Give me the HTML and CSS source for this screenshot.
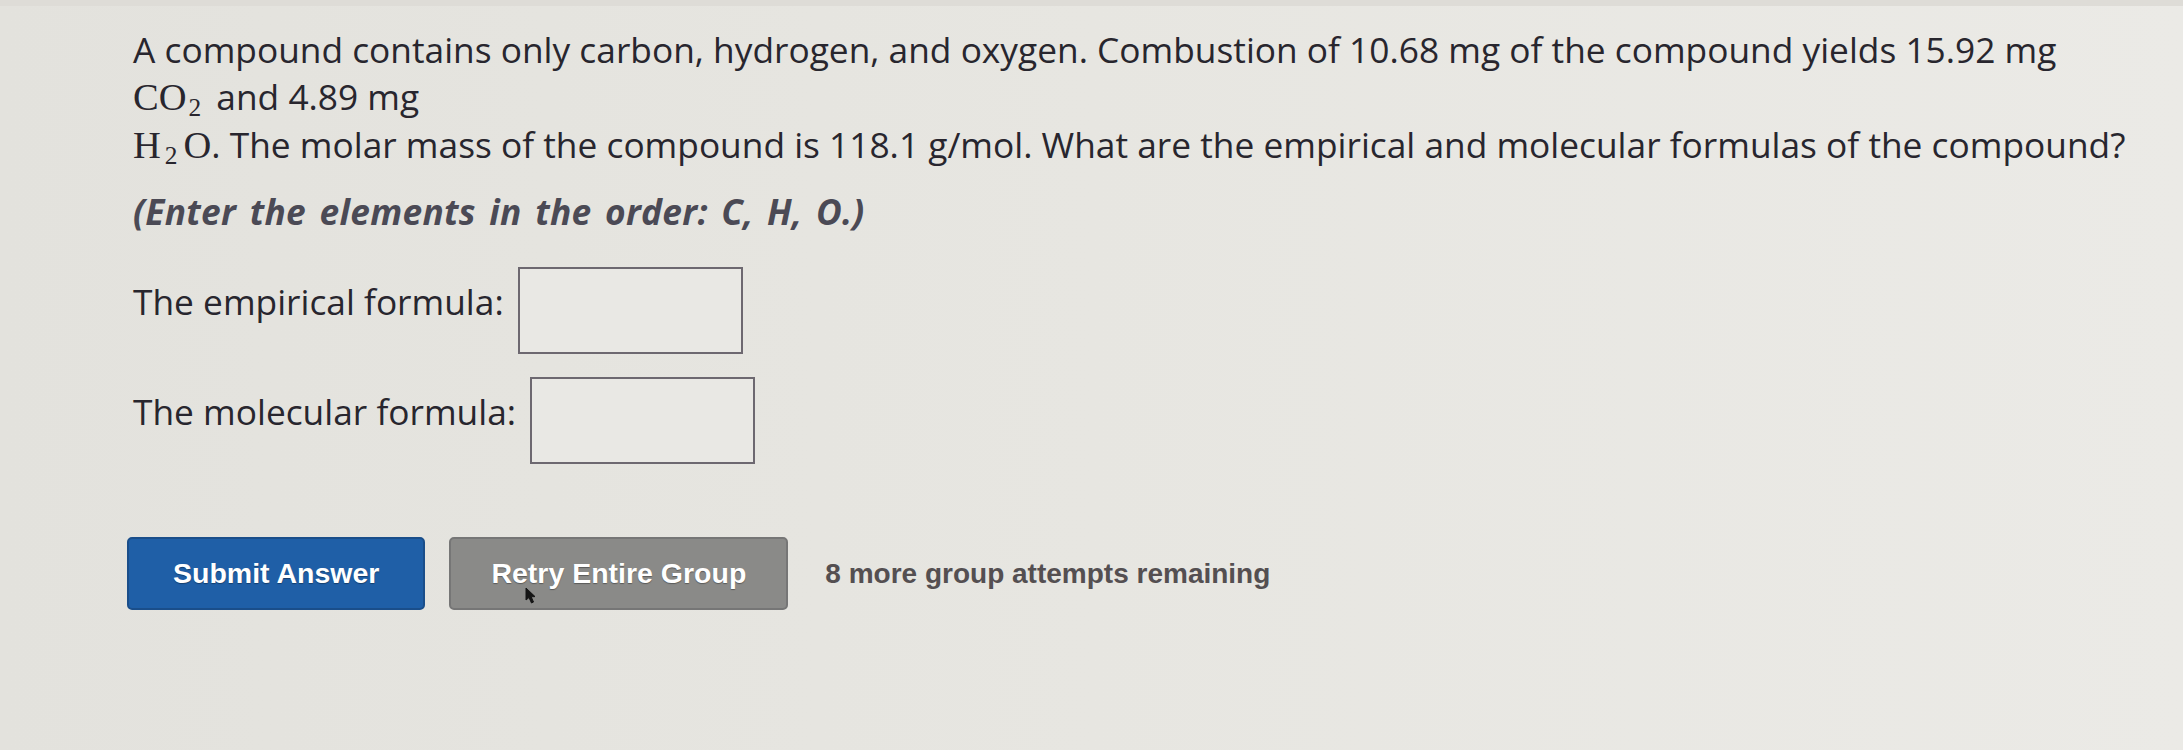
FILE: index.html
```html
<!DOCTYPE html>
<html lang="en">
<head>
<meta charset="utf-8">
<title>Question</title>
<link rel="stylesheet" href="styles.css">
</head>
<body>
<div class="page">
  <div class="question">
    <p class="prompt">A compound contains only carbon, hydrogen, and oxygen. Combustion of 10.68 mg of the compound yields 15.92 mg<br><span class="chem">CO<sub class="tail">2</sub></span> and 4.89 mg<br><span class="chem">H<sub class="gap">2</sub>O</span>. The molar mass of the compound is 118.1 g/mol. What are the empirical and molecular formulas of the compound?</p>
    <p class="hint">(Enter the elements in the order: C, H, O.)</p>
    <div class="answer-row">
      <span class="label">The empirical formula:</span>
      <input class="answer-box" type="text" aria-label="The empirical formula">
    </div>
    <div class="answer-row">
      <span class="label">The molecular formula:</span>
      <input class="answer-box" type="text" aria-label="The molecular formula">
    </div>
    <div class="actions">
      <button class="btn btn-submit" type="button">Submit Answer</button>
      <button class="btn btn-retry" type="button">Retry Entire Group<svg class="pointer" viewBox="0 0 12 17" width="12" height="17"><path d="M1 1 L1 13 L4 10.5 L6.5 16 L8.5 15 L6.2 9.8 L10 9.6 Z" fill="#151515" stroke="#151515" stroke-width="1" stroke-linejoin="round"/></svg></button>
      <span class="attempts">8 more group attempts remaining</span>
    </div>
  </div>
</div>
</body>
</html>
```
FILE: styles.css
```css
html, body {
  margin: 0;
  padding: 0;
}

body {
  background: linear-gradient(90deg, #e3e2dd 0%, #e7e6e1 50%, #ebeae6 100%);
  color: #28262e;
  font-family: "Open Sans", "DejaVu Sans", sans-serif;
  width: 2183px;
  height: 750px;
  overflow: hidden;
}

.page {
  border-top: 6px solid #dedcd7;
}

.question {
  padding: 20px 0 0 127px;
}

.prompt {
  margin: 0;
  padding-left: 6px;
  font-size: 35.3px;
  line-height: 47px;
  white-space: nowrap;
}

.chem {
  font-family: "Liberation Serif", "DejaVu Serif", serif;
  font-size: 38.5px;
}

.chem sub {
  font-size: 0.66em;
  line-height: 0;
  vertical-align: -0.24em;
  margin-left: 2px;
}

.chem sub.tail {
  margin-right: 6px;
}

.chem sub.gap {
  margin-left: 4px;
  margin-right: 6px;
}

.hint {
  margin: 19px 0 0;
  padding-left: 6px;
  font-size: 35.3px;
  line-height: 47px;
  font-weight: 700;
  font-style: italic;
  letter-spacing: 0.3px;
  word-spacing: 4px;
  color: #4b4a55;
  white-space: nowrap;
}

.answer-row {
  display: flex;
  align-items: center;
  padding-left: 6px;
  height: 87px;
  margin-top: 32px;
}

.answer-row + .answer-row {
  margin-top: 23px;
}

.label {
  font-size: 35.3px;
  line-height: 35.3px;
  margin-bottom: 18px;
  white-space: nowrap;
}

.answer-box {
  box-sizing: border-box;
  width: 225px;
  height: 87px;
  margin-left: 14px;
  border: 2px solid #6d6870;
  border-radius: 0;
  background: #e9e8e4;
  padding: 0 8px;
  font-size: 28px;
  font-family: "Open Sans", sans-serif;
}

.actions {
  display: flex;
  align-items: center;
  gap: 24px;
  margin-top: 73px;
}

.btn {
  position: relative;
  box-sizing: border-box;
  height: 73px;
  padding: 0 44px;
  border-radius: 5px;
  font-family: "Liberation Sans", Arial, sans-serif;
  font-weight: 700;
  font-size: 28.5px;
  color: #ffffff;
  text-shadow: 0 1px 1px rgba(0, 0, 0, 0.35);
  cursor: pointer;
}

.btn-submit {
  background: #1f5fa7;
  border: 2px solid #1a4e8a;
}

.btn-retry {
  padding: 0 40px;
  background: #8a8a88;
  border: 2px solid #767676;
}

.pointer {
  position: absolute;
  left: 74px;
  top: 48px;
}

.attempts {
  margin-left: 13px;
  font-family: "Liberation Sans", Arial, sans-serif;
  font-weight: 700;
  font-size: 28px;
  color: #544f51;
  white-space: nowrap;
}
```
